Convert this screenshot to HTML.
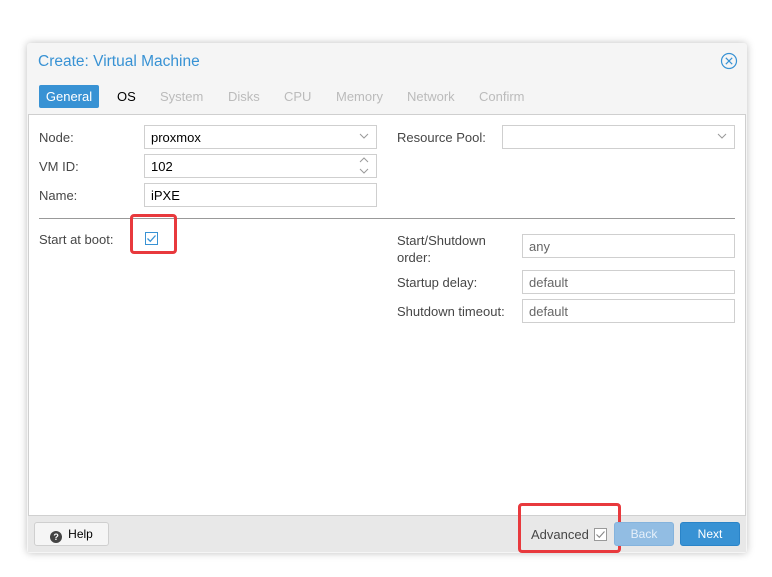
<!DOCTYPE html>
<html><head><meta charset="utf-8"><style>
*{box-sizing:border-box;margin:0;padding:0}
body{width:772px;height:577px;background:#fff;font-family:"Liberation Sans",Arial,sans-serif;font-size:13px;color:#464646;position:relative;overflow:hidden}
.a{position:absolute}
#dlg{left:27px;top:43px;width:720px;height:510px;background:#f5f5f5;border-radius:3px;box-shadow:0 0 8px rgba(0,0,0,.25)}
.title{left:38px;top:53px;font-size:15.5px;color:#3892d4}
.tab{top:89px;font-size:13px;color:#bbb}
.body{left:28px;top:114px;width:718px;height:401px;background:#fff;border:1px solid #cfcfcf;border-bottom:none}
.foot{left:28px;top:515px;width:718px;height:37px;background:#e8e8e8;border-top:1px solid #d0d0d0}
.lbl{font-size:13px;color:#464646}
.inp{height:24px;border:1px solid #cfcfcf;background:#fff;padding:4px 6px;font-size:13px;color:#000}
.ph{color:#666}
.red{border:3px solid #e8393d;border-radius:4px}
.btn{height:24px;border-radius:3px;font-size:12px;text-align:center;line-height:22px}
</style></head><body>
<div id="dlg" class="a"></div>
<div class="a title">Create: Virtual Machine</div>
<svg class="a" style="left:720px;top:52px" width="18" height="18" viewBox="0 0 18 18"><circle cx="9" cy="9" r="7.5" fill="none" stroke="#3892d4" stroke-width="1.2"/><path d="M5.8 5.8L12.2 12.2M12.2 5.8L5.8 12.2" stroke="#3892d4" stroke-width="1.2"/></svg>
<div class="a" style="left:39px;top:85px;width:60px;height:23px;background:#3892d4;border-radius:2px;color:#fff;text-align:center;line-height:23px">General</div>
<div class="a tab" style="left:117px;color:#000">OS</div>
<div class="a tab" style="left:160px">System</div>
<div class="a tab" style="left:228px">Disks</div>
<div class="a tab" style="left:284px">CPU</div>
<div class="a tab" style="left:336px">Memory</div>
<div class="a tab" style="left:407px">Network</div>
<div class="a tab" style="left:479px">Confirm</div>
<div class="a body"></div>
<div class="a lbl" style="left:39px;top:130px">Node:</div>
<div class="a inp" style="left:144px;top:125px;width:233px">proxmox</div>
<svg class="a" style="left:359px;top:132px" width="10" height="8"><path d="M1 2L5 6L9 2" fill="none" stroke="#999"/></svg>
<div class="a lbl" style="left:39px;top:159px">VM ID:</div>
<div class="a inp" style="left:144px;top:154px;width:233px">102</div>
<svg class="a" style="left:359px;top:156px" width="10" height="20"><path d="M1 6L5 2L9 6M1 13L5 17L9 13" fill="none" stroke="#999"/></svg>
<div class="a lbl" style="left:39px;top:188px">Name:</div>
<div class="a inp" style="left:144px;top:183px;width:233px">iPXE</div>
<div class="a lbl" style="left:397px;top:130px">Resource Pool:</div>
<div class="a inp" style="left:502px;top:125px;width:233px"></div>
<svg class="a" style="left:717px;top:132px" width="10" height="8"><path d="M1 2L5 6L9 2" fill="none" stroke="#999"/></svg>
<div class="a" style="left:39px;top:218px;width:696px;height:1px;background:#999"></div>
<div class="a lbl" style="left:39px;top:232px">Start at boot:</div>
<div class="a red" style="left:130px;top:214px;width:47px;height:40px"></div>
<svg class="a" style="left:144px;top:231px" width="15" height="15"><rect x="1.5" y="1.5" width="12" height="12" fill="#fff" stroke="#3892d4"/><path d="M3.5 7.5L6.3 10.3L11.5 4.5" fill="none" stroke="#3892d4" stroke-width="1.3"/></svg>
<div class="a lbl" style="left:397px;top:232px;line-height:17px">Start/Shutdown<br>order:</div>
<div class="a inp ph" style="left:522px;top:234px;width:213px">any</div>
<div class="a lbl" style="left:397px;top:275px">Startup delay:</div>
<div class="a inp ph" style="left:522px;top:270px;width:213px">default</div>
<div class="a lbl" style="left:397px;top:304px">Shutdown timeout:</div>
<div class="a inp ph" style="left:522px;top:299px;width:213px">default</div>
<div class="a foot"></div>
<div class="a btn" style="left:34px;top:522px;width:75px;background:#f5f5f5;border:1px solid #cfcfcf;color:#000"><span style="display:inline-block;width:12px;height:12px;border-radius:6px;background:#444;color:#fff;font-size:9px;line-height:12px;font-weight:bold;vertical-align:-2px;margin-right:6px">?</span>Help</div>
<div class="a red" style="left:518px;top:503px;width:103px;height:50px"></div>
<div class="a lbl" style="left:531px;top:527px;font-size:13px">Advanced</div>
<svg class="a" style="left:593px;top:527px" width="15" height="15"><rect x="1.5" y="1.5" width="12" height="12" fill="#fff" stroke="#999"/><path d="M3.5 7.5L6.3 10.3L11.5 4.5" fill="none" stroke="#888" stroke-width="1.1"/></svg>
<div class="a btn" style="left:614px;top:522px;width:60px;background:#92bde3;border:1px solid #84b3dd;color:#e6f0fa">Back</div>
<div class="a btn" style="left:680px;top:522px;width:60px;background:#3892d4;border:1px solid #2a84c8;color:#fff">Next</div>
</body></html>
